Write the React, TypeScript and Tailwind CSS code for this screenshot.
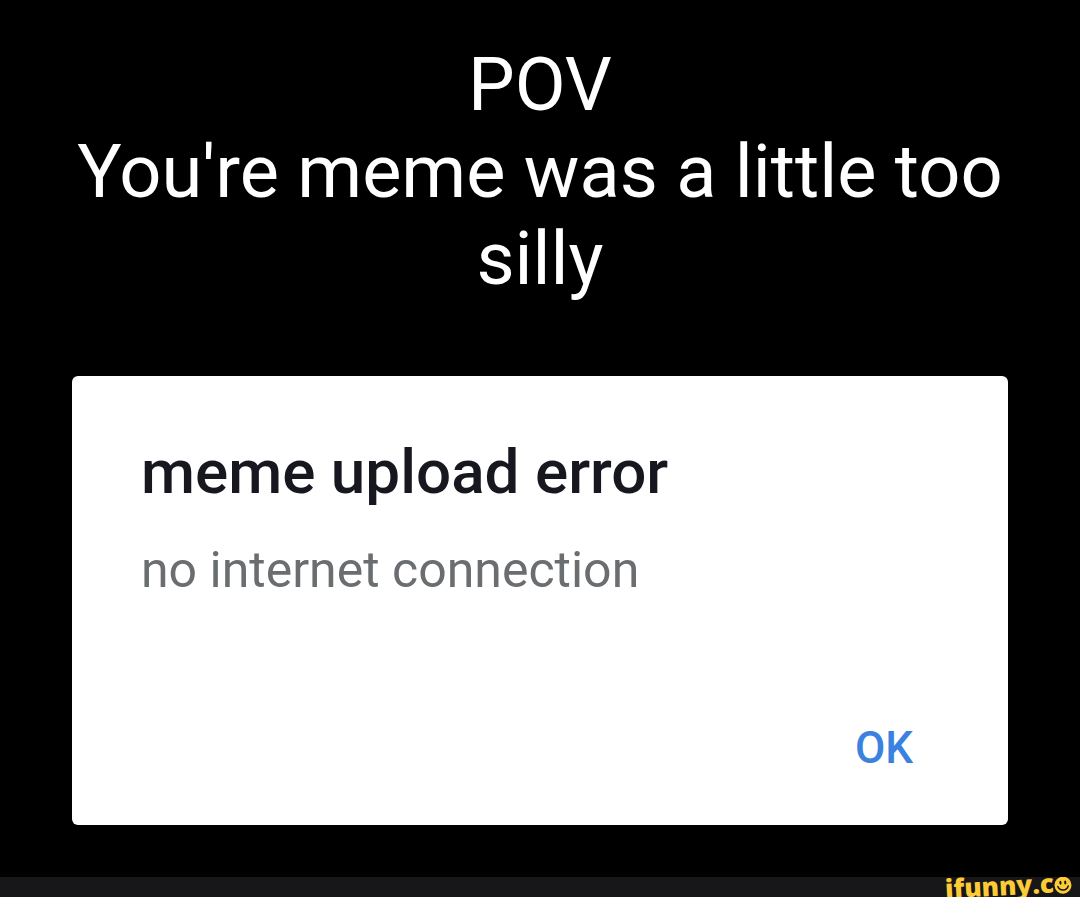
function Watermark() {
  return (
    <div className="flex h-5 items-start justify-end overflow-hidden bg-[#171719] pr-2">
      <a
        href="#ifunny"
        className="flex -rotate-3 items-end font-['Open_Sans',sans-serif] text-[26px] leading-4 font-extrabold text-[#fccb35]"
      >
        <span className="pb-1">ifunny.c</span>
        <svg viewBox="0 0 18 18" className="size-[18px]" aria-hidden="true">
          <circle cx="9" cy="9" r="8.5" fill="#fccb35" />
          <ellipse cx="6.6" cy="6.5" rx="1.1" ry="1.9" fill="#171719" />
          <ellipse cx="11.4" cy="6.5" rx="1.1" ry="1.9" fill="#171719" />
          <path
            d="M3.8 10.1c1.8 5 8.6 5 10.4 0"
            fill="none"
            stroke="#171719"
            strokeWidth="1.5"
            strokeLinecap="round"
          />
        </svg>
      </a>
    </div>
  )
}

function App() {
  return (
    <div className="flex min-h-screen flex-col bg-black font-[Roboto,sans-serif]">
      <main className="flex grow flex-col px-[72px] pt-[41px]">
        <h1 className="text-center text-[74px] leading-[87px] text-white">
          POV
          <br />
          You're meme was a little too silly
        </h1>
        <section
          role="alertdialog"
          aria-labelledby="dialog-title"
          aria-describedby="dialog-message"
          className="mt-[74px] flex flex-col rounded-md bg-white px-[69px] pt-15 pb-[27px]"
        >
          <h2 id="dialog-title" className="text-[62px] leading-[72px] font-medium text-[#17171f]">
            meme upload error
          </h2>
          <p id="dialog-message" className="mt-8 text-[50px] leading-15 text-[#6b6e70]">
            no internet connection
          </p>
          <button className="mt-[98px] self-end p-[26px] text-[44px] leading-12 font-medium text-[#3b82e0]">
            OK
          </button>
        </section>
      </main>
      <Watermark />
    </div>
  )
}

export default App
